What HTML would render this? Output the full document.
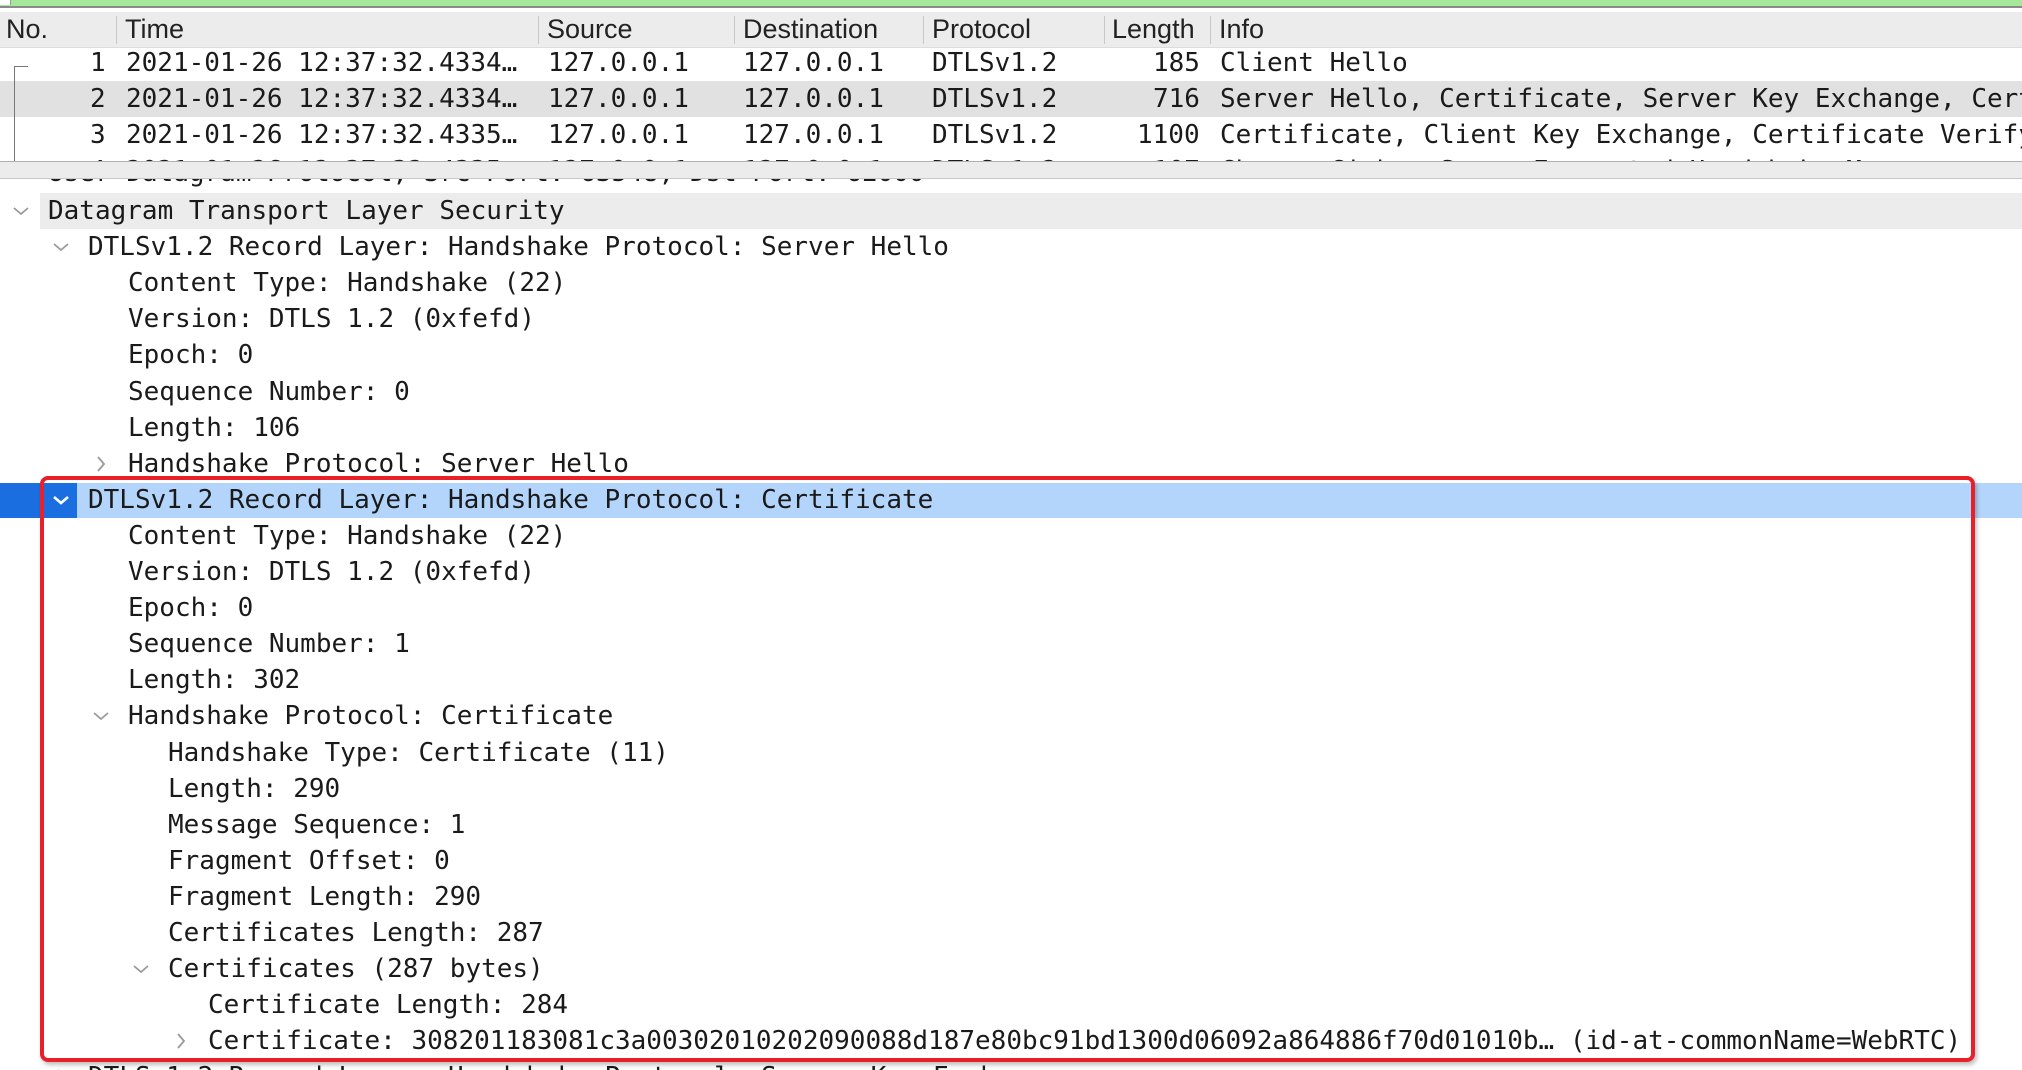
<!DOCTYPE html>
<html style="overflow:hidden;width:2022px;height:1070px"><head><meta charset="utf-8"><style>
body{margin:0;width:2022px;height:1070px;overflow:hidden;background:#fff;position:relative;font-family:"DejaVu Sans Mono","Liberation Mono",monospace;font-size:26px;color:#1a1a1a}
#wrap{position:absolute;left:0;top:0;width:2022px;height:1070px;overflow:hidden}
.a{position:absolute;white-space:pre}
.hd{font-family:"Liberation Sans",sans-serif;font-size:27px;color:#222}
.r{position:absolute;left:0;width:2022px;height:36px;line-height:36px;overflow:hidden}
.t{position:absolute;white-space:pre;top:0}
.sep{position:absolute;top:16px;width:1px;height:28px;background:#c8c8c8}
svg{position:absolute}
</style></head><body><div id="wrap">
<div class="a" style="left:0;top:0;width:2022px;height:6px;background:#a6e89a;border-bottom:2px solid #8a8a8a"></div>
<div class="a" style="left:0;top:0;width:10px;height:5px;background:#fff;border-right:1px solid #999"></div>
<div class="a" style="left:0;top:12px;width:2022px;height:35px;background:#ececec;border-bottom:1px solid #ddd"></div>
<div class="sep" style="left:116px"></div><div class="sep" style="left:538px"></div><div class="sep" style="left:734px"></div><div class="sep" style="left:923px"></div><div class="sep" style="left:1104px"></div><div class="sep" style="left:1210px"></div>
<div class="a hd" style="left:6px;top:14px">No.</div>
<div class="a hd" style="left:125px;top:14px">Time</div>
<div class="a hd" style="left:547px;top:14px">Source</div>
<div class="a hd" style="left:743px;top:14px">Destination</div>
<div class="a hd" style="left:932px;top:14px">Protocol</div>
<div class="a hd" style="left:1112px;top:14px">Length</div>
<div class="a hd" style="left:1219px;top:14px">Info</div>

<div class="r" style="top:45px"><span class="t" style="left:90px">1</span><span class="t" style="left:126px">2021-01-26 12:37:32.4334…</span><span class="t" style="left:548px">127.0.0.1</span><span class="t" style="left:743px">127.0.0.1</span><span class="t" style="left:932px">DTLSv1.2</span><span class="t" style="left:1153px">185</span><span class="t" style="left:1220px">Client Hello</span></div>
<div class="r" style="top:81px;background:#e1e1e1"><span class="t" style="left:90px">2</span><span class="t" style="left:126px">2021-01-26 12:37:32.4334…</span><span class="t" style="left:548px">127.0.0.1</span><span class="t" style="left:743px">127.0.0.1</span><span class="t" style="left:932px">DTLSv1.2</span><span class="t" style="left:1153px">716</span><span class="t" style="left:1220px">Server Hello, Certificate, Server Key Exchange, Certificate Request</span></div>
<div class="r" style="top:117px"><span class="t" style="left:90px">3</span><span class="t" style="left:126px">2021-01-26 12:37:32.4335…</span><span class="t" style="left:548px">127.0.0.1</span><span class="t" style="left:743px">127.0.0.1</span><span class="t" style="left:932px">DTLSv1.2</span><span class="t" style="left:1137px">1100</span><span class="t" style="left:1220px">Certificate, Client Key Exchange, Certificate Verify</span></div>
<div class="r" style="top:153px;height:9px"><span class="t" style="left:90px">4</span><span class="t" style="left:126px">2021-01-26 12:37:32.4335…</span><span class="t" style="left:548px">127.0.0.1</span><span class="t" style="left:743px">127.0.0.1</span><span class="t" style="left:932px">DTLSv1.2</span><span class="t" style="left:1153px">107</span><span class="t" style="left:1220px">Change Cipher Spec, Encrypted Handshake Message</span></div>
<div class="a" style="left:14px;top:66px;width:1px;height:96px;background:#777"></div>
<div class="a" style="left:14px;top:66px;width:14px;height:1px;background:#777"></div>
<div class="a" style="left:0;top:161px;width:2022px;height:16px;background:#ececec;border-top:1px solid #b0b0b0;border-bottom:1px solid #c8c8c8"></div>

<div class="a" style="left:0;top:179px;width:2022px;height:12px;overflow:hidden"><div class="a" style="left:48px;top:-21px">User Datagram Protocol, Src Port: 63548, Dst Port: 62000</div></div>
<div class="a" style="left:40px;top:193px;width:1982px;height:36px;background:#ececec"></div>
<div class="a" style="left:0;top:483px;width:2022px;height:35px;background:#b4d5fb"></div>
<div class="a" style="left:0;top:483px;width:77px;height:35px;background:#1b6ee0"></div>

<div id="rows"></div>
<div class="a" style="left:40px;top:476px;width:1927px;height:578px;border:4px solid #e8202a;border-radius:8px;box-shadow:2px 3px 4px rgba(0,0,0,.25)"></div>
</div>
<script>
var R=[[0,'v','Datagram Transport Layer Security'],[1,'v','DTLSv1.2 Record Layer: Handshake Protocol: Server Hello'],[2,'','Content Type: Handshake (22)'],[2,'','Version: DTLS 1.2 (0xfefd)'],[2,'','Epoch: 0'],[2,'','Sequence Number: 0'],[2,'','Length: 106'],[2,'>','Handshake Protocol: Server Hello'],[1,'s','DTLSv1.2 Record Layer: Handshake Protocol: Certificate'],[2,'','Content Type: Handshake (22)'],[2,'','Version: DTLS 1.2 (0xfefd)'],[2,'','Epoch: 0'],[2,'','Sequence Number: 1'],[2,'','Length: 302'],[2,'v','Handshake Protocol: Certificate'],[3,'','Handshake Type: Certificate (11)'],[3,'','Length: 290'],[3,'','Message Sequence: 1'],[3,'','Fragment Offset: 0'],[3,'','Fragment Length: 290'],[3,'','Certificates Length: 287'],[3,'v','Certificates (287 bytes)'],[4,'','Certificate Length: 284'],[4,'>','Certificate: 308201183081c3a00302010202090088d187e80bc91bd1300d06092a864886f70d01010b… (id-at-commonName=WebRTC)'],[1,'>','DTLSv1.2 Record Layer: Handshake Protocol: Server Key Exchange']];
var h='';R.forEach(function(r,i){var y=211+36.1*i,x=48+40*r[0];h+='<div class="a" style="left:'+x+'px;top:'+(y-18)+'px;line-height:36px">'+r[2]+'</div>';var cx=x-28,cy=y;
if(r[1]=='v')h+='<svg style="left:'+(cx-8)+'px;top:'+(cy-6)+'px" width="18" height="12"><path d="M2 3l7 6 7-6" fill="none" stroke="#999" stroke-width="1.8"/></svg>';
if(r[1]=='s')h+='<svg style="left:'+(cx-8)+'px;top:'+(cy-6)+'px" width="18" height="12"><path d="M2 3l7 6 7-6" fill="none" stroke="#fff" stroke-width="2.6"/></svg>';
if(r[1]=='>')h+='<svg style="left:'+(cx-5)+'px;top:'+(cy-9)+'px" width="12" height="18"><path d="M3 2l6 7-6 7" fill="none" stroke="#999" stroke-width="1.8"/></svg>';});
document.getElementById('rows').innerHTML=h;
</script>
</body></html>
